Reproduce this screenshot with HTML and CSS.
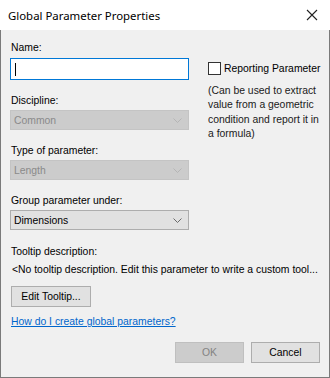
FILE: index.html
```html
<!DOCTYPE html>
<html>
<head>
<meta charset="utf-8">
<link rel="stylesheet" href="styles.css">
</head>
<body>
<div class="dialog">
  <div class="titlebar">
    <span class="title">Global Parameter Properties</span>
    <svg class="close" width="12" height="12" viewBox="0 0 12 12"><path d="M1 1L11 11M11 1L1 11" stroke="#222" stroke-width="1.1" fill="none"/></svg>
  </div>
  <div class="content">
    <div class="top">
      <div class="left">
        <div class="label first">Name:</div>
        <div class="input"><span class="caret"></span></div>
        <div class="label">Discipline:</div>
        <div class="select disabled"><span>Common</span><svg class="chev" width="9" height="5" viewBox="0 0 9 5"><path d="M0.5 0.5L4.5 4.5L8.5 0.5" stroke="#b5b5b5" fill="none"/></svg></div>
        <div class="label">Type of parameter:</div>
        <div class="select disabled"><span>Length</span><svg class="chev" width="9" height="5" viewBox="0 0 9 5"><path d="M0.5 0.5L4.5 4.5L8.5 0.5" stroke="#b5b5b5" fill="none"/></svg></div>
        <div class="label">Group parameter under:</div>
        <div class="select"><span>Dimensions</span><svg class="chev" width="9" height="5" viewBox="0 0 9 5"><path d="M0.5 0.5L4.5 4.5L8.5 0.5" stroke="#6a6a6a" fill="none"/></svg></div>
      </div>
      <div class="right">
        <div class="check-row"><span class="checkbox"></span><span>Reporting Parameter</span></div>
        <div class="desc">(Can be used to extract value from a geometric condition and report it in a formula)</div>
      </div>
    </div>
    <div class="label tip-label">Tooltip description:</div>
    <div class="tip-text">&lt;No tooltip description. Edit this parameter to write a custom tool...</div>
    <div class="btn edit">Edit Tooltip...</div>
    <a class="link" href="#">How do I create global parameters?</a>
    <div class="actions">
      <div class="btn disabled-btn">OK</div>
      <div class="btn">Cancel</div>
    </div>
  </div>
</div>
</body>
</html>
```
FILE: styles.css
```css
html, body {
  margin: 0;
  padding: 0;
}
body {
  font-family: "Liberation Sans", Arial, sans-serif;
  font-size: 10.4px;
  color: #000;
}
.dialog {
  width: 330px;
  height: 378px;
  display: flex;
  flex-direction: column;
}
.titlebar {
  height: 30px;
  background: #fff;
  display: flex;
  align-items: center;
  justify-content: space-between;
  padding: 0 12px 0 8px;
  flex: none;
}
.title {
  font-family: "Noto Sans", "Open Sans", sans-serif;
  font-size: 11.4px;
  color: #000;
}
.close {
  display: block;
}
.content {
  flex: 1;
  background: #f0f0f0;
  border: 1px solid #7a7a7a;
  border-top: none;
  padding: 0 9px 0 9px;
  display: flex;
  flex-direction: column;
}
.top {
  display: flex;
}
.left {
  width: 179px;
  flex: none;
  display: flex;
  flex-direction: column;
}
.label {
  line-height: 13px;
  height: 13px;
  padding-left: 1px;
  margin-top: 14px;
  margin-bottom: 3px;
}
.label.first {
  margin-top: 11px;
  margin-bottom: 4px;
}
.input {
  height: 20px;
  background: #fff;
  border: 1px solid #0078d7;
  display: flex;
  align-items: center;
  padding-left: 4px;
}
.caret {
  width: 1px;
  height: 13px;
  background: #000;
}
.select {
  height: 18px;
  background: #e1e1e1;
  border: 1px solid #adadad;
  display: flex;
  align-items: center;
  justify-content: space-between;
  padding: 0 6px 0 3px;
}
.select.disabled {
  background: #cccccc;
  border-color: #c4c4c4;
  color: #8a8a8a;
}
.chev {
  display: block;
}
.right {
  margin-left: 19px;
  padding-top: 32px;
  flex: 1;
  min-width: 0;
  display: flex;
  flex-direction: column;
}
.check-row {
  display: flex;
  align-items: center;
  height: 13px;
  line-height: 13px;
  white-space: nowrap;
}
.checkbox {
  flex: none;
  width: 11px;
  height: 11px;
  border: 1px solid #333;
  background: #fff;
  margin-right: 3px;
}
.desc {
  margin-top: 9px;
  line-height: 14.3px;
  color: #1a1a1a;
}
.tip-label {
  margin-top: 15px;
  margin-bottom: 5px;
}
.tip-text {
  line-height: 13px;
  padding-left: 2px;
  white-space: nowrap;
}
.btn {
  height: 19px;
  border: 1px solid #adadad;
  background: #e1e1e1;
  display: flex;
  align-items: center;
  justify-content: center;
}
.btn.edit {
  width: 78px;
  margin-left: 1px;
  margin-top: 10px;
}
.link {
  color: #0066cc;
  text-decoration: underline;
  line-height: 13px;
  margin-top: 8px;
  padding-left: 1px;
  align-self: flex-start;
}
.actions {
  display: flex;
  justify-content: flex-end;
  gap: 7px;
  margin-top: 14px;
  padding-right: 0;
}
.actions .btn {
  width: 67px;
}
.btn.disabled-btn {
  background: #cccccc;
  border-color: #bfbfbf;
  color: #838383;
}
```
